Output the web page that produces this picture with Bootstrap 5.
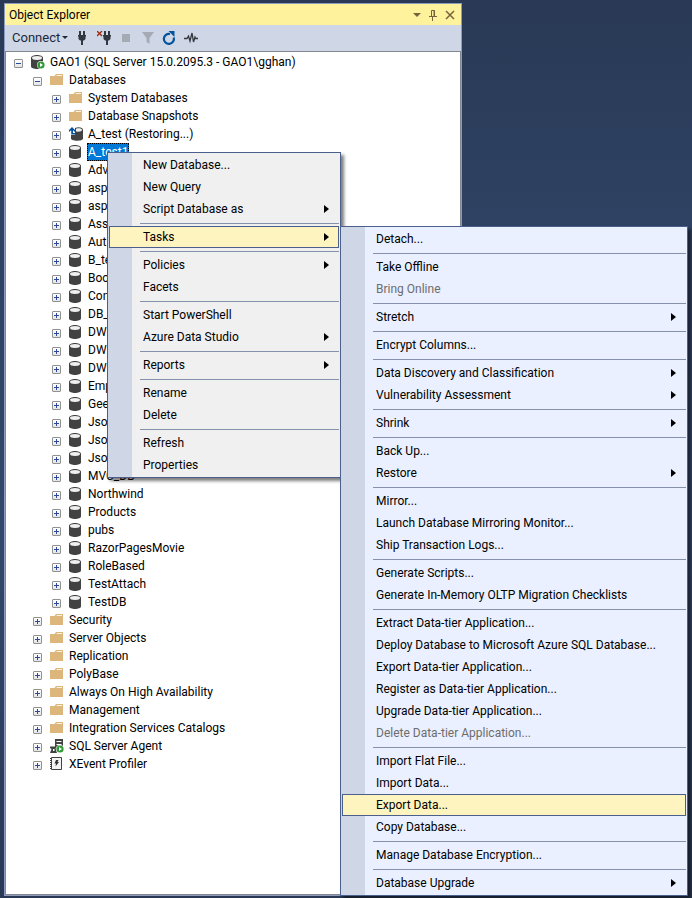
<!DOCTYPE html>
<html lang="en">
<head>
<meta charset="utf-8">
<meta name="viewport" content="width=device-width, initial-scale=1">
<title>Object Explorer</title>
<link href="https://cdn.jsdelivr.net/npm/bootstrap@5.3.0/dist/css/bootstrap.min.css" rel="stylesheet">
<style>
  body { background: linear-gradient(#293955, #2f4263 25%, #34486b 60%, #293955); font-family: Roboto, "Open Sans", sans-serif; font-size: 12px; line-height: 18px; color: #000; min-height: 100vh; }
  button { font: inherit; color: inherit; }
  .shell { min-height: 100vh; padding: 3px 4px 2px; }
  .explorer { flex: 0 1 458px; border: 1px solid #8e9bbc; }
  .titlebar { background: #fff29d; height: 21px; padding: 0 6px 0 4px; }
  .titlebar h1 { font-size: 12px; line-height: 22px; }
  .toolstrip { background: #cfd6e5; height: 26px; padding: 0 7px; color: #1b293e; }
  .connect { font-size: 13px; gap: 2px; margin-right: 9px; }
  .unplug { margin-left: 2px; }
  .flat { background: none; border: 0; padding: 0; }
  .tree { background: #fff; border: 1px solid #828790; padding: 1px 0 0 8px; }
  .tree ul { margin: 0; padding: 0 0 0 19px; list-style: none; }
  .tree > ul { padding: 0; }
  .node { height: 18px; white-space: nowrap; }
  .twist { width: 9px; height: 9px; margin: 2px 8px 0 0; border: 1px solid #919191; border-radius: 1px; background: linear-gradient(#fff, #e4e4e4); padding: 0; display: flex; }
  .pic { width: 14px; height: 14px; margin-right: 4px; }
  .tag { padding: 0 1px; }
  .picked { background: #0078d7; color: #fff; outline: 1px dotted #000; outline-offset: -1px; }
  .popup { list-style: none; margin: 0; padding: 1px; border: 1px solid #4a5f8c; box-shadow: 3px 3px 3px rgba(0,0,0,.5); position: absolute; background: linear-gradient(90deg, #cfd6e5 24px, var(--face) 24px); }
  .popup-main { --face: #f0f0f0; left: 107px; top: 152px; width: 234px; z-index: 2; }
  .popup-tasks { --face: #eaf0ff; left: 231px; top: 0; width: 348px; z-index: 3; }
  .popup > li { position: relative; }
  .entry { display: flex; align-items: center; justify-content: space-between; width: 100%; height: 22px; padding: 0 9px 0 33px; border: 1px solid transparent; background: none; text-align: left; white-space: nowrap; }
  .entry:disabled { color: #6d6d6d; }
  .entry.hot { background: #fdf4bf; border-color: #4a5f8c; }
  .rule { height: 6px; padding: 3px 0 2px 31px; }
  .rule::before { content: ""; display: block; height: 1px; background: #8591aa; }
</style>
<script src="https://cdn.jsdelivr.net/npm/bootstrap@5.3.0/dist/js/bootstrap.bundle.min.js"></script>
</head>
<body>
<svg width="0" height="0" class="position-absolute" aria-hidden="true">
  <symbol id="folder" viewBox="0 0 14 14"><path fill="#dcb67a" d="M0 3h4.500l1.500-2h7v11H0z"/><path fill="#fbf3e4" d="M7 2h5v1H6.300z"/></symbol>
  <symbol id="db" viewBox="0 0 14 14"><path fill="#424242" d="M0 3C0-1 12-1 12 3v8.500c0 3.300-12 3.300-12 0z"/><ellipse cx="6" cy="3" rx="5" ry="1.900" fill="#f0f0f0"/></symbol>
  <symbol id="play" viewBox="0 0 8 8"><circle cx="4" cy="4" r="4" fill="#fff"/><circle cx="4" cy="4" r="3.600" fill="#2f9a36"/><path fill="#fff" d="M3 2l3 2-3 2z"/></symbol>
  <symbol id="server" viewBox="0 0 14 14"><use href="#db" width="14" height="14"/><use href="#play" x="6" y="6" width="8" height="8"/></symbol>
  <symbol id="restoring" viewBox="0 0 14 14"><path fill="#424242" d="M6 1c4-1.500 8-.500 8 2v8.500c0 3-12 3-12 0V8h4z"/><path fill="#f0f0f0" d="M7 1.700c3-.800 6-.300 6 1.300 0 1.500-3 2-6 1.600z"/><path fill="#00539c" d="M3 0l3 3v2L4 3.300V6h2v1.500H2.200V3.300L0 5V3z"/></symbol>
  <symbol id="agent" viewBox="0 0 14 14"><path fill="#424242" d="M5 0h8v8H5z"/><path stroke="#fff" d="M6.500 2.500h5M6.500 5.500h5"/><path fill="#424242" d="M0 9V7.500h7V9H5.500l1.500 5H0l1.500-4z"/><path fill="#fff" d="M3 10h1.500v2H3z"/><use href="#play" x="6" y="6" width="8" height="8"/></symbol>
  <symbol id="xevent" viewBox="0 0 14 14"><path fill="#f4f4f4" stroke="#424242" d="M1.500.500h10v12h-10z"/><path stroke="#424242" stroke-width="2" stroke-dasharray="1 1" d="M1 1v12"/><path fill="#333" d="M6 3h2.500l-1 2H9L5.500 9.500l.5-3H4.500z"/></symbol>
  <symbol id="plug" viewBox="0 0 10 14"><path fill="#33373f" d="M2 0h2v4H2zM6 0h2v4H6zM1 4h8v1.500H8.500V8L7 9.500H6V14H4V9.500H3L1.500 8V5.500H1z"/></symbol>
</svg>
<main class="shell d-flex position-relative">
  <section class="explorer d-flex flex-column">
    <header class="titlebar d-flex align-items-center">
      <h1 class="m-0 me-auto fw-normal">Object Explorer</h1>
      <button class="flat d-flex me-2" aria-label="Window position"><svg width="8" height="4"><path fill="#75633d" d="M0 0h8L4 4z"/></svg></button>
      <button class="flat d-flex me-2" aria-label="Auto hide"><svg width="8" height="12" fill="none" stroke="#75633d"><path d="M2.500 7V1.500h3V7M5 1v6M0 7.500h8M3.500 8v4"/></svg></button>
      <button class="flat d-flex" aria-label="Close"><svg width="10" height="10" stroke="#75633d" stroke-width="1.500"><path d="M1 1l8 8M9 1L1 9"/></svg></button>
    </header>
    <nav class="toolstrip d-flex align-items-center" aria-label="Explorer tools">
      <button class="flat connect d-flex align-items-center">Connect<svg width="6" height="4"><path fill="#1b293e" d="M0 0h6L3 3z"/></svg></button>
      <div class="d-flex align-items-center gap-2">
        <button class="flat d-flex" aria-label="Connect server"><svg width="10" height="14"><use href="#plug"/></svg></button>
        <button class="flat unplug d-flex" aria-label="Disconnect"><svg width="15" height="14"><use href="#plug" x="5" width="10" height="14"/><path stroke="#a1260d" stroke-width="1.300" d="M0 0l5 5M5 0L0 5"/></svg></button>
        <button class="flat d-flex" aria-label="Stop" disabled><svg width="13" height="14"><path fill="#a6aab4" d="M2 3h8v8H2z"/></svg></button>
        <button class="flat d-flex" aria-label="Filter" disabled><svg width="13" height="14"><path fill="#a6aab4" d="M1 1h12L8.500 7v6l-3-2V7z"/></svg></button>
        <button class="flat d-flex" aria-label="Refresh"><svg width="14" height="14"><path fill="none" stroke="#00539c" stroke-width="2.200" d="M11.700 6.500A5 5 0 1 1 8 3"/><path fill="#00539c" d="M6.500 0h6v6z"/></svg></button>
        <button class="flat d-flex" aria-label="Activity Monitor"><svg width="14" height="14" fill="none" stroke="#33373f" stroke-width="1.300"><path d="M0 7.500h3L4.500 5 6 10l2-8 1.500 9L11 6l.7 1.500H14"/></svg></button>
      </div>
    </nav>
    <div class="tree flex-grow-1" id="tree"></div>
  </section>
  <ul class="popup popup-main" id="mainMenu"></ul>
</main>
<script>
  const databases = ["A_test (Restoring...)", "A_test1", "Adv", "asp", "asp", "Ass", "Aut", "B_te", "Boo", "Con", "DB_", "DW", "DW", "DW", "Emp", "Gee", "Json", "Json", "Json", "MVC_DB", "Northwind", "Products", "pubs", "RazorPagesMovie", "RoleBased", "TestAttach", "TestDB"];
  const folders = ["Security", "Server Objects", "Replication", "PolyBase", "Always On High Availability", "Management", "Integration Services Catalogs"];
  const node = (name, icon, open, kids = "") => `<li><div class="node d-flex align-items-center"><button class="twist" aria-label="Toggle ${name}"><svg width="7" height="7"><path fill="#2b4a9b" d="M1 3h5v1H1z${open ? "" : "M3 1h1v5H3z"}"/></svg></button><svg class="pic"><use href="#${icon}"/></svg><span class="tag ${name === "A_test1" ? "picked" : ""}">${name}</span></div>${kids && `<ul>${kids}</ul>`}</li>`;
  const dbNodes = ["System Databases", "Database Snapshots"].map(n => node(n, "folder")).join("") + databases.map(n => node(n, n.includes("Restoring") ? "restoring" : "db")).join("");
  const serverNodes = node("Databases", "folder", true, dbNodes) + folders.map(n => node(n, "folder")).join("") + node("SQL Server Agent", "agent") + node("XEvent Profiler", "xevent");
  document.getElementById("tree").innerHTML = `<ul>${node("GAO1 (SQL Server 15.0.2095.3 - GAO1\\gghan)", "server", true, serverNodes)}</ul>`;

  const tasks = ["Detach...", "-", "Take Offline", "!Bring Online", "-", "Stretch>", "-", "Encrypt Columns...", "-", "Data Discovery and Classification>", "Vulnerability Assessment>", "-", "Shrink>", "-", "Back Up...", "Restore>", "-", "Mirror...", "Launch Database Mirroring Monitor...", "Ship Transaction Logs...", "-", "Generate Scripts...", "Generate In-Memory OLTP Migration Checklists", "-", "Extract Data-tier Application...", "Deploy Database to Microsoft Azure SQL Database...", "Export Data-tier Application...", "Register as Data-tier Application...", "Upgrade Data-tier Application...", "!Delete Data-tier Application...", "-", "Import Flat File...", "Import Data...", "*Export Data...", "Copy Database...", "-", "Manage Database Encryption...", "-", "Database Upgrade>"];
  const main = ["New Database...", "New Query", "Script Database as>", "-", "*Tasks>", "-", "Policies>", "Facets", "-", "Start PowerShell", "Azure Data Studio>", "-", "Reports>", "-", "Rename", "Delete", "-", "Refresh", "Properties"];
  const entry = t => {
    if (t === "-") return `<li class="rule" role="separator"></li>`;
    const label = t.replace(/^[!*]|>$/g, "");
    return `<li><button class="entry ${t[0] === "*" ? "hot" : ""}" ${t[0] === "!" ? "disabled" : ""}>${label}${t.endsWith(">") ? '<svg width="5" height="8"><path d="M0 0l5 4-5 4z"/></svg>' : ""}</button>${label === "Tasks" ? `<ul class="popup popup-tasks">${tasks.map(entry).join("")}</ul>` : ""}</li>`;
  };
  document.getElementById("mainMenu").innerHTML = main.map(entry).join("");
</script>
</body>
</html>
